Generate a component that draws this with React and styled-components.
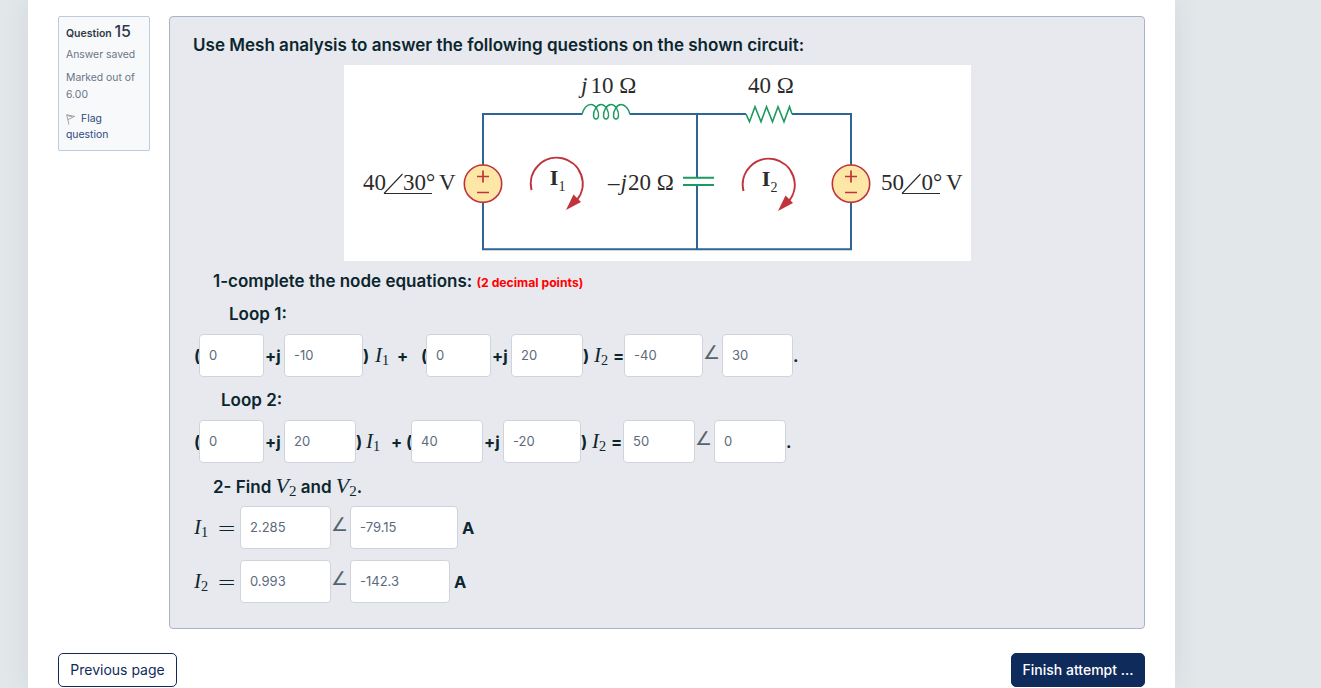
import React from "react";
import styled, { createGlobalStyle } from "styled-components";

const Global = createGlobalStyle`
  html, body {
    margin: 0;
    height: 100%;
    overflow: hidden;
    background: #e2e7ea;
    font-family: Inter, "Liberation Sans", sans-serif;
  }
`;

const Page = styled.div`
  box-sizing: border-box;
  width: 1147px;
  height: 688px;
  margin-left: 28px;
  padding: 16px 30px 0;
  background: #fff;
  box-shadow: 0 0 24px rgba(60, 80, 90, 0.1);
`;

const Columns = styled.div`
  display: grid;
  grid-template-columns: 92px 976px;
  column-gap: 19px;
  align-items: start;
`;

const Info = styled.div`
  box-sizing: border-box;
  height: 135px;
  padding: 6px 6px 0 7px;
  background: #f7f9fb;
  border: 1px solid #bccbe0;
  border-radius: 2px;
  font-size: 10.4px;
  line-height: 17px;
  color: #6a7589;
`;

const QuestionNo = styled.div`
  height: 19px;
  line-height: 17px;
  font-size: 10.5px;
  font-weight: 600;
  color: #323a48;

  b {
    font-size: 16px;
    font-weight: 500;
  }
`;

const InfoLine = styled.div`
  margin-top: ${(p) => p.$top || 0}px;
`;

const FlagLink = styled.div`
  margin-top: 8px;
  line-height: 16px;
  color: #2d4a7a;

  svg {
    vertical-align: -3px;
    margin-right: 6px;
  }
`;

const Content = styled.div`
  box-sizing: border-box;
  height: 613px;
  padding: 18px 23px 0 24px;
  background: #e7e9ee;
  border: 1px solid #a9b3c9;
  border-radius: 4px;
  color: #0c262e;
`;

const Title = styled.div`
  height: 20px;
  line-height: 20px;
  margin-left: -1px;
  font-size: 17.05px;
  font-weight: 600;
  white-space: nowrap;
`;

const Figure = styled.svg`
  display: block;
  width: 627px;
  height: 196px;
  margin: 10px 0 0 150px;
  background: #fff;
`;

const Label = styled.div`
  height: 20px;
  line-height: 20px;
  margin: ${(p) => p.$top}px 0 0 ${(p) => p.$indent}px;
  font-size: 17px;
  font-weight: 600;
  white-space: nowrap;
`;

const Note = styled.span`
  font-size: 12.2px;
  font-weight: 700;
  color: #f00;
`;

const Row = styled.div`
  display: flex;
  align-items: center;
  height: 43px;
  margin-top: ${(p) => p.$top}px;
  white-space: nowrap;
`;

const Sym = styled.span`
  box-sizing: border-box;
  flex: none;
  width: ${(p) => p.$w}px;
  padding-left: ${(p) => p.$pad || 0}px;
  font-size: 16.5px;
  font-weight: 700;
`;

const Mi = styled.span`
  flex: none;
  width: ${(p) => p.$w}px;
  font-family: "Liberation Serif", serif;
  font-style: italic;
  font-size: ${(p) => p.$size || 21}px;
  font-weight: 400;

  sub {
    font-style: normal;
    font-size: 0.68em;
    line-height: 0;
    vertical-align: -0.18em;
  }
`;

const Equals = styled.span`
  flex: none;
  width: ${(p) => p.$w}px;
  font-family: "DejaVu Sans", sans-serif;
  font-size: 23px;
  font-weight: 200;
`;

const Angle = styled.span`
  flex: none;
  width: ${(p) => p.$w}px;
  font-family: "Liberation Serif", "DejaVu Sans", sans-serif;
  font-size: 19px;
  font-weight: 400;
  line-height: 1;
  margin-top: -6px;
  color: #56636b;
`;

const Field = styled.input`
  box-sizing: border-box;
  flex: none;
  width: ${(p) => p.$w}px;
  height: 43px;
  padding: 0 9px 1px;
  background: #fff;
  border: 1px solid #cfd4dc;
  border-radius: 4px;
  font-family: Inter, "Liberation Sans", sans-serif;
  font-size: 13px;
  color: #5d6a7c;
  outline: none;
`;

const Actions = styled.div`
  display: flex;
  justify-content: space-between;
  margin-top: 24px;
`;

const Button = styled.button`
  box-sizing: border-box;
  height: 34px;
  width: ${(p) => p.$w}px;
  padding: 0 0 2px;
  border: 1px solid #0f2b5b;
  border-radius: 5px;
  background: ${(p) => (p.$primary ? "#0f2b5b" : "#fff")};
  color: ${(p) => (p.$primary ? "#fff" : "#0f2b5b")};
  font-family: Inter, "Liberation Sans", sans-serif;
  font-size: 14px;
  font-weight: ${(p) => (p.$primary ? 500 : 400)};
`;

const WIRE = "#2f6596";
const GREEN = "#1c9a5f";
const RED = "#c1323a";
const INK = "#2b2b2b";

const serif = { fontFamily: "'Liberation Serif', serif", fontSize: 23, fill: INK };

const Source = ({ cx }) => (
  <g>
    <circle cx={cx} cy={118.7} r={18.7} fill="#fde7a6" stroke={RED} strokeWidth="1.6" />
    <path d={`M${cx - 6} 111.5H${cx + 6}M${cx} 105.5V117.5M${cx - 6} 127.5H${cx + 6}`} stroke={RED} strokeWidth="1.7" fill="none" />
  </g>
);

const LoopArrow = ({ dx, dy, n }) => (
  <g transform={`translate(${dx} ${dy})`}>
    <path d="M187.5 125 A26 26 0 1 1 233 135" fill="none" stroke={RED} strokeWidth="2" />
    <path d="M222 145 L229.5 129.5 L237 137 Z" fill={RED} />
    <text x="210" y="120" textAnchor="middle" style={{ ...serif, fontWeight: 700, fontSize: 22 }}>I</text>
    <text x="214.5" y="126" style={{ ...serif, fontSize: 14 }}>{n}</text>
  </g>
);

const Circuit = () => (
  <Figure viewBox="0 0 627 196">
    <path d="M139 100V49H238M286 49H402M448 49H507V100M507 137.5V184.3H139V137.5M353 49V112.5M353 120.5V184.3" fill="none" stroke={WIRE} strokeWidth="2" />
    {/* inductor */}
    <path
      d="M238 49.5C240 42 244 39.5 247 39.5C252 39.5 255 47 254.5 51C254 55 250 55 249.5 51C249 46 253 39.5 257 39.5C262 39.5 265 47 264.5 51C264 55 260 55 259.5 51C259 46 263 39.5 267 39.5C272 39.5 275 47 274.5 51C274 55 270 55 269.5 51C269 46 273 39.5 277 39.5C281 39.5 285 44 286 49.5"
      fill="none"
      stroke={GREEN}
      strokeWidth="1.5"
    />
    {/* resistor */}
    <path d="M402 49L405.5 56.7L411 41.7L417 56.7L422.5 41.7L428.5 56.7L434 41.7L440 56.7L445.5 41.7L448 49" fill="none" stroke={GREEN} strokeWidth="1.6" />
    {/* capacitor */}
    <path d="M339 112.7H370M339 120H370" fill="none" stroke={GREEN} strokeWidth="2" />
    <Source cx={139} />
    <Source cx={507} />
    <LoopArrow dx={0} dy={0} n="1" />
    <LoopArrow dx={212} dy={1} n="2" />
    <text x="237" y="28" style={serif}><tspan fontStyle="italic">j</tspan><tspan dx="3">10 Ω</tspan></text>
    <text x="404" y="28" style={serif}>40 Ω</text>
    <text x="19" y="125" style={serif}>40</text>
    <text x="59" y="125" style={serif}>30°</text>
    <text x="95" y="125" style={serif}>V</text>
    <path d="M40 128.5H88M40 128.5L58.5 109" fill="none" stroke={INK} strokeWidth="1.1" />
    <text x="264" y="125" style={serif}>–<tspan fontStyle="italic" dx="1">j</tspan><tspan dx="1">20 Ω</tspan></text>
    <text x="537" y="125" style={serif}>50</text>
    <text x="577.5" y="125" style={serif}>0°</text>
    <text x="602" y="125" style={serif}>V</text>
    <path d="M558 128.5H596M558 128.5L576.5 109" fill="none" stroke={INK} strokeWidth="1.1" />
  </Figure>
);

const FlagIcon = () => (
  <svg width="9" height="11" viewBox="0 0 9 11">
    <path d="M0.6 0.5L3 10.5M0.8 0.8L8.6 2.4L2 5.6M1.6 1.6L6.2 2.6" fill="none" stroke="#8a8f96" strokeWidth="0.8" />
  </svg>
);

export default function App() {
  return (
    <Page>
      <Global />
      <Columns>
        <Info>
          <QuestionNo>Question <b>15</b></QuestionNo>
          <InfoLine $top={4}>Answer saved</InfoLine>
          <InfoLine $top={6}>Marked out of 6.00</InfoLine>
          <FlagLink><FlagIcon />Flag question</FlagLink>
        </Info>
        <Content>
          <Title>Use Mesh analysis to answer the following questions on the shown circuit:</Title>
          <Circuit />
          <Label $top={10} $indent={19}>1-complete the node equations: <Note>(2 decimal points)</Note></Label>
          <Label $top={13} $indent={35}>Loop 1:</Label>
          <Row $top={10}>
            <Sym $w={5}>(</Sym>
            <Field $w={65} defaultValue="0" />
            <Sym $w={20} $pad={1}>+j</Sym>
            <Field $w={79} defaultValue="-10" />
            <Sym $w={12}>)</Sym>
            <Mi $w={22}>I<sub>1</sub></Mi>
            <Sym $w={24}>+</Sym>
            <Sym $w={5}>(</Sym>
            <Field $w={65} defaultValue="0" />
            <Sym $w={20} $pad={1}>+j</Sym>
            <Field $w={72} defaultValue="20" />
            <Sym $w={11}>)</Sym>
            <Mi $w={19}>I<sub>2</sub></Mi>
            <Sym $w={11}>=</Sym>
            <Field $w={79} defaultValue="-40" />
            <Angle $w={19}>∠</Angle>
            <Field $w={71} defaultValue="30" />
            <Sym $w={5}>.</Sym>
          </Row>
          <Label $top={13} $indent={27}>Loop 2:</Label>
          <Row $top={10}>
            <Sym $w={5}>(</Sym>
            <Field $w={65} defaultValue="0" />
            <Sym $w={20} $pad={1}>+j</Sym>
            <Field $w={72} defaultValue="20" />
            <Sym $w={10}>)</Sym>
            <Mi $w={25}>I<sub>1</sub></Mi>
            <Sym $w={15}>+</Sym>
            <Sym $w={5}>(</Sym>
            <Field $w={72} defaultValue="40" />
            <Sym $w={20} $pad={1}>+j</Sym>
            <Field $w={78} defaultValue="-20" />
            <Sym $w={11}>)</Sym>
            <Mi $w={19}>I<sub>2</sub></Mi>
            <Sym $w={12}>=</Sym>
            <Field $w={72} defaultValue="50" />
            <Angle $w={19}>∠</Angle>
            <Field $w={72} defaultValue="0" />
            <Sym $w={5}>.</Sym>
          </Row>
          <Label $top={13} $indent={19}>2- Find <Mi $size={22}>V<sub>2</sub></Mi> and <Mi $size={22}>V<sub>2</sub></Mi>.</Label>
          <Row $top={10}>
            <Mi $w={23}>I<sub>1</sub></Mi>
            <Equals $w={23}>=</Equals>
            <Field $w={91} defaultValue="2.285" />
            <Angle $w={19}>∠</Angle>
            <Field $w={108} defaultValue="-79.15" />
            <Sym $w={17} $pad={4}>A</Sym>
          </Row>
          <Row $top={11}>
            <Mi $w={23}>I<sub>2</sub></Mi>
            <Equals $w={23}>=</Equals>
            <Field $w={91} defaultValue="0.993" />
            <Angle $w={19}>∠</Angle>
            <Field $w={100} defaultValue="-142.3" />
            <Sym $w={17} $pad={4}>A</Sym>
          </Row>
        </Content>
      </Columns>
      <Actions>
        <Button $w={119}>Previous page</Button>
        <Button $w={134} $primary>Finish attempt ...</Button>
      </Actions>
    </Page>
  );
}
